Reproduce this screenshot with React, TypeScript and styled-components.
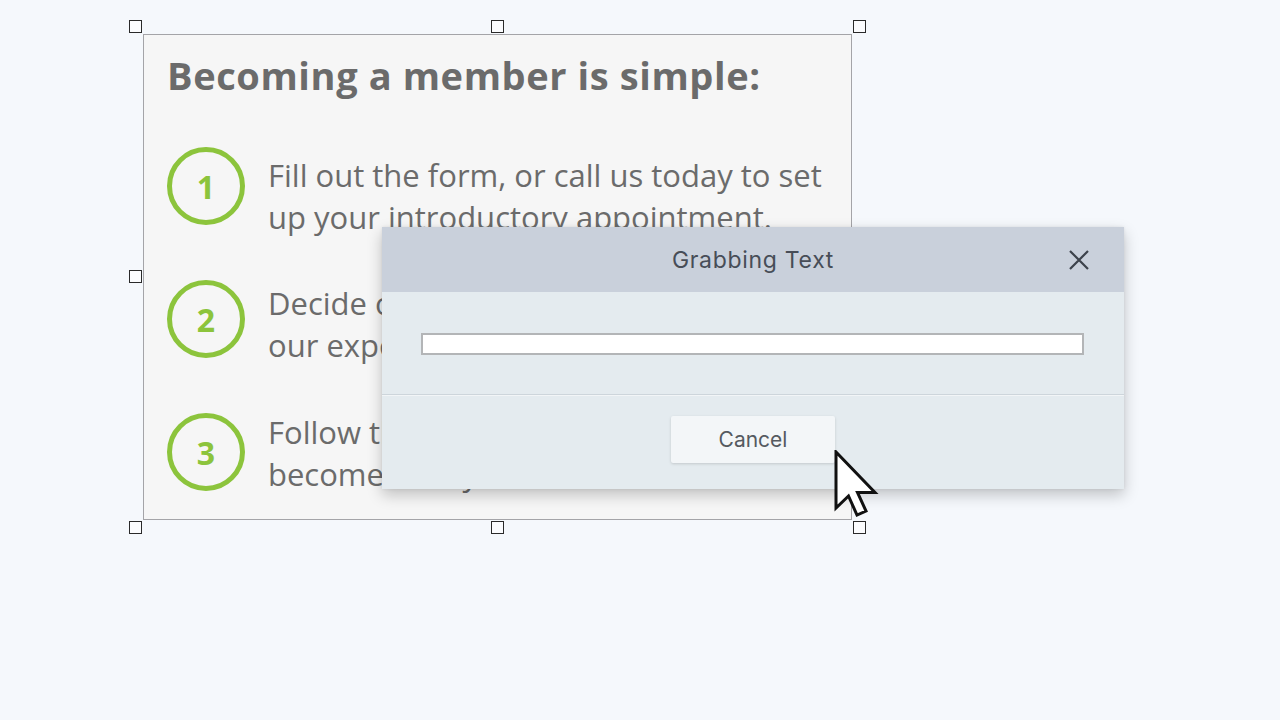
import React from 'react'
import styled, { createGlobalStyle } from 'styled-components'

const GlobalStyle = createGlobalStyle`
    html, body {
        margin: 0;
        padding: 0;
        background: #f5f8fc;
    }
    #root {
        width: 1280px;
        height: 720px;
        overflow: hidden;
    }
`

const Canvas = styled.div`
    position: relative;
    width: 1280px;
    height: 720px;
    background: #f5f8fc;
`

// selected image frame sits on the free canvas
const Selection = styled.div`
    position: absolute;
    left: 129px;
    top: 20px;
    padding: 14px;
`

const Handle = styled.span<{ $x: 'l' | 'm' | 'r'; $y: 't' | 'm' | 'b' }>`
    position: absolute;
    width: 11px;
    height: 11px;
    border: 1.5px solid #2a2a2a;
    background: #fbfcfe;
    ${(p) => (p.$x === 'l' ? 'left: 0;' : p.$x === 'r' ? 'right: 0;' : 'left: 50%; margin-left: -7px;')}
    ${(p) => (p.$y === 't' ? 'top: 0;' : p.$y === 'b' ? 'bottom: 0;' : 'top: 50%; margin-top: -7px;')}
`

const Card = styled.div`
    width: 684px;
    height: 468px;
    border: 1px solid #a4a4a8;
    background: #f6f6f6;
    padding: 16px 0 0 23px;
    font-family: 'Open Sans', 'Noto Sans', sans-serif;
    color: #6b6b6b;
    display: flex;
    flex-direction: column;
`

const Title = styled.h1`
    margin: 0;
    font-size: 38px;
    line-height: 48px;
    font-weight: 700;
    letter-spacing: 0.6px;
`

const Steps = styled.div`
    margin-top: 48px;
    display: flex;
    flex-direction: column;
    gap: 42px;
`

const Step = styled.div`
    height: 91px;
    display: flex;
    align-items: flex-start;
    gap: 23px;
`

const Circle = styled.div`
    flex: none;
    width: 68px;
    height: 68px;
    border: 5px solid #8cc43c;
    border-radius: 50%;
    display: flex;
    align-items: center;
    justify-content: center;
    color: #8cc43c;
    font-size: 32px;
    font-weight: 700;
`

const StepText = styled.p<{ $shift: number }>`
    margin: ${(p) => p.$shift}px 0 0;
    font-size: 31px;
    line-height: 42px;
    white-space: nowrap;
`

const Dialog = styled.div`
    position: absolute;
    left: 382px;
    top: 227px;
    width: 742px;
    height: 262px;
    display: flex;
    flex-direction: column;
    background: #e4ebef;
    box-shadow: 0 6px 14px rgba(0, 0, 0, 0.22), 0 0 3px rgba(0, 0, 0, 0.08);
    font-family: 'Inter', 'Lato', sans-serif;
`

const Header = styled.div`
    height: 65px;
    flex: none;
    background: #c9d0db;
    display: flex;
    align-items: center;
    justify-content: center;
    position: relative;
    color: #474d57;
    font-size: 23px;
    letter-spacing: 0.7px;
`

const Close = styled.button`
    position: absolute;
    right: 33px;
    top: 21px;
    width: 24px;
    height: 24px;
    border: 0;
    padding: 0;
    background: transparent;
    display: flex;
    align-items: center;
    justify-content: center;
`

const Body = styled.div`
    height: 102px;
    flex: none;
    padding: 0 39px;
    display: flex;
    align-items: center;
    border-bottom: 1px solid #cdd5db;
`

const Progress = styled.div`
    width: 663px;
    height: 22px;
    box-sizing: border-box;
    border: 2px solid #b3b5b7;
    background: #ffffff;
    margin-top: 2px;
`

const Footer = styled.div`
    flex: 1;
    border-top: 1px solid #f2f5f7;
    display: flex;
    justify-content: center;
    padding-top: 20px;
`

const CancelButton = styled.button`
    width: 164px;
    height: 47px;
    border: 0;
    border-radius: 2px;
    background: #f3f6f8;
    box-shadow: 0 1px 3px rgba(0, 0, 0, 0.15);
    font-family: 'Inter', 'Lato', sans-serif;
    font-size: 21px;
    color: #555a60;
`

const Cursor = styled.svg`
    position: absolute;
    left: 834px;
    top: 450px;
`

const steps = [
    { n: 1, shift: 7, lines: ['Fill out the form, or call us today to set', 'up your introductory appointment.'] },
    { n: 2, shift: 2, lines: ['Decide on a membership level with help from', 'our experienced staff.'] },
    { n: 3, shift: -2, lines: ['Follow the simple steps to complete and', 'become a fully certified member.'] },
]

const App = () => {
    return (
        <Canvas>
            <GlobalStyle />
            <Selection>
                <Card>
                    <Title>Becoming a member is simple:</Title>
                    <Steps>
                        {steps.map((s) => (
                            <Step key={s.n}>
                                <Circle>{s.n}</Circle>
                                <StepText $shift={s.shift}>
                                    {s.lines[0]}
                                    <br />
                                    {s.lines[1]}
                                </StepText>
                            </Step>
                        ))}
                    </Steps>
                </Card>
                <Handle $x='l' $y='t' />
                <Handle $x='m' $y='t' />
                <Handle $x='r' $y='t' />
                <Handle $x='l' $y='m' />
                <Handle $x='r' $y='m' />
                <Handle $x='l' $y='b' />
                <Handle $x='m' $y='b' />
                <Handle $x='r' $y='b' />
            </Selection>

            <Dialog>
                <Header>
                    Grabbing Text
                    <Close aria-label='Close'>
                        <svg width='22' height='22' viewBox='0 0 22 22'>
                            <path d='M2 2 L20 20 M20 2 L2 20' stroke='#3d434c' strokeWidth='2.2' />
                        </svg>
                    </Close>
                </Header>
                <Body>
                    <Progress />
                </Body>
                <Footer>
                    <CancelButton>Cancel</CancelButton>
                </Footer>
            </Dialog>

            <Cursor width='46' height='68' viewBox='0 0 46 68'>
                <path
                    d='M2 2 L2 58 L14.5 46 L23 65 L32 61 L23.5 42.5 L41 42.5 Z'
                    fill='#ffffff'
                    stroke='#111111'
                    strokeWidth='3'
                    strokeLinejoin='miter'
                />
            </Cursor>
        </Canvas>
    )
}

export default App
